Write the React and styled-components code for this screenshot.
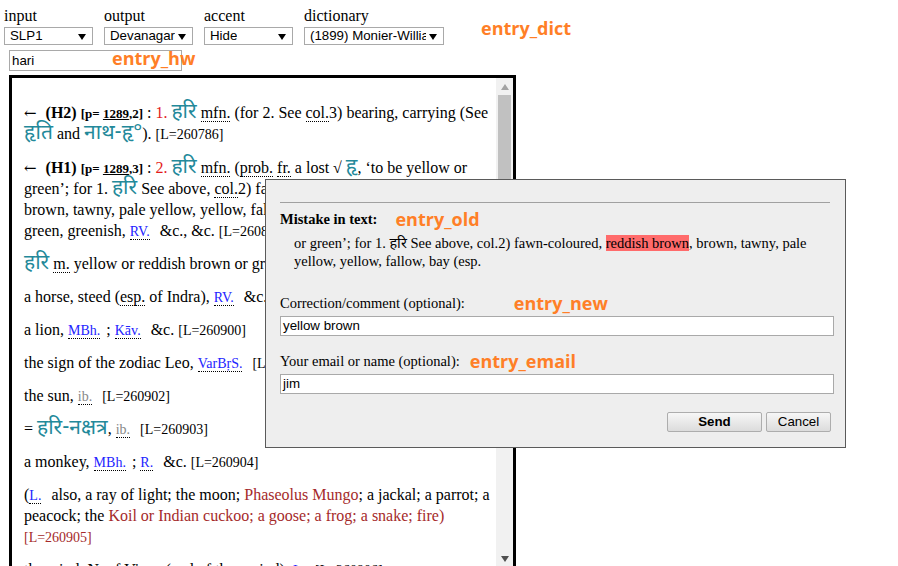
import { createGlobalStyle, styled } from "styled-components";

const GlobalStyle = createGlobalStyle`
    html, body {
        margin: 0;
        padding: 0;
        background: #fff;
        overflow: hidden;
        font-family: "Liberation Serif", "Times New Roman", serif;
        color: #000;
    }
`;

const DEVA = `"Noto Sans Devanagari", "Noto Serif Devanagari", "Lohit Devanagari", "Mukta", sans-serif`;

const Page = styled.div`
    position: relative;
    width: 898px;
    height: 566px;
    overflow: hidden;
`;

const Toolbar = styled.div`
    display: flex;
    align-items: flex-start;
    gap: 11px;
    padding: 6px 0 0 4px;
`;

const Field = styled.div`
    display: flex;
    flex-direction: column;
    font-size: 16px;
    line-height: 20px;
`;

const Select = styled.div`
    display: flex;
    align-items: center;
    justify-content: space-between;
    box-sizing: border-box;
    width: ${(p) => p.width || 89}px;
    height: 18px;
    margin-top: 1px;
    padding: 0 6px 0 5px;
    border: 1px solid #a9a9a9;
    background: #fff;
    font-family: "Liberation Sans", Arial, sans-serif;
    font-size: 13.3px;
    line-height: 16px;
    span {
        overflow: hidden;
        white-space: nowrap;
    }
    svg {
        flex: none;
        margin-left: 3px;
    }
`;

const Note = styled.span`
    font-family: "Open Sans", "Liberation Sans", sans-serif;
    font-weight: 700;
    font-size: 18px;
    line-height: 18px;
    color: #ff7f27;
    white-space: nowrap;
    margin-left: ${(p) => p.gap || 0}px;
`;

const DictNote = styled(Note)`
    margin-top: 13px;
`;

const HwRow = styled.div`
    position: relative;
    margin: 5px 0 0 9px;
    width: 173px;
    height: 21px;
    ${Note} {
        position: absolute;
        left: 103px;
        top: -1px;
    }
`;

const TextInput = styled.div`
    box-sizing: border-box;
    width: 100%;
    height: ${(p) => p.h || 21}px;
    border: 1px solid #a9a9a9;
    background: #fff;
    padding: 0 2px;
    font-family: "Liberation Sans", Arial, sans-serif;
    font-size: 13.3px;
    line-height: ${(p) => (p.h || 21) - 2}px;
`;

const EntryBox = styled.div`
    display: flex;
    box-sizing: border-box;
    margin: 4px 0 0 9px;
    width: 507px;
    height: 495px;
    border: 3px solid #000;
`;

const Entries = styled.div`
    flex: 1;
    overflow: hidden;
    padding: 24px 2px 0 12px;
    font-size: 16px;
    line-height: 21px;
`;

const Para = styled.p`
    margin: 0 0 ${(p) => p.gap || 12}px;
`;

const Back = styled.span`
    font-family: "DejaVu Serif", serif;
    font-size: 15px;
    line-height: 0;
    margin-right: 5px;
`;

const Scrollbar = styled.div`
    display: flex;
    flex-direction: column;
    width: 17px;
    background: #f1f1f1;
`;

const ScrollBtn = styled.div`
    height: 17px;
    display: flex;
    align-items: center;
    justify-content: center;
`;

const Thumb = styled.div`
    margin: 0 2px;
    height: ${(p) => p.h}px;
    background: #c1c1c1;
`;

const Track = styled.div`
    flex: 1;
`;

const Deva = styled.span`
    font-family: ${DEVA};
    font-size: 21px;
    line-height: 0;
    color: #23899a;
`;

const Abbr = styled.span`
    border-bottom: 1px dotted #000;
`;

const Src = styled.span`
    font-size: 14px;
    line-height: 0;
    color: ${(p) => (p.grey ? "#888" : "#2323ff")};
    border-bottom: 1px dotted #000;
    margin-right: 6px;
`;

const PageRef = styled.span`
    font-size: 13px;
    line-height: 0;
    font-weight: 700;
    u {
        text-decoration: underline;
    }
`;

const LNum = styled.span`
    font-size: 14px;
    line-height: 0;
    color: ${(p) => p.color || "#000"};
`;

const Num = styled.span`
    color: #e31b1b;
`;

const Brown = styled.span`
    color: #a52a2a;
`;

const Dialog = styled.div`
    position: absolute;
    left: 265px;
    top: 179px;
    box-sizing: border-box;
    width: 581px;
    height: 269px;
    border: 1px solid #5a5a5a;
    background: #eeeeee;
    padding: 22px 11px 0 14px;
    display: flex;
    flex-direction: column;
`;

const Rule = styled.div`
    height: 1px;
    margin-right: 4px;
    background: #a0a0a0;
`;

const DialogLabel = styled.div`
    display: flex;
    align-items: center;
    height: 18px;
    margin-top: ${(p) => p.mt}px;
    margin-bottom: ${(p) => p.mb || 0}px;
    font-size: 14.5px;
    line-height: 18px;
    font-weight: ${(p) => (p.bold ? 700 : 400)};
`;

const OldText = styled.div`
    margin-top: 6px;
    padding-left: 14px;
    font-size: 14.5px;
    line-height: 18px;
    white-space: nowrap;
    mark {
        background: #ff6b6b;
        color: #000;
    }
    ${Deva} {
        font-size: 14.5px;
        color: #000;
    }
`;

const Buttons = styled.div`
    display: flex;
    justify-content: flex-end;
    gap: 4px;
    margin: 18px 3px 0 0;
`;

const Button = styled.div`
    box-sizing: border-box;
    width: ${(p) => p.w}px;
    height: 20px;
    border: 1px solid #adadad;
    border-radius: 2px;
    background: linear-gradient(#f7f7f7, #dcdcdc);
    font-family: "Liberation Sans", Arial, sans-serif;
    font-size: 13.3px;
    font-weight: ${(p) => (p.bold ? 700 : 400)};
    line-height: 18px;
    text-align: center;
`;

const Arrow = ({ up, color = "#000", w = 8, h = 7 }) => (
    <svg width={w} height={h} viewBox="0 0 8 7">
        <path d={up ? "M0 7 L4 1 L8 7 Z" : "M0 1 L8 1 L4 7 Z"} fill={color} />
    </svg>
);

const selects = [
    { label: "input", value: "SLP1" },
    { label: "output", value: "Devanagari" },
    { label: "accent", value: "Hide" },
    { label: "dictionary", value: "(1899) Monier-Williams", width: 140 },
];

export default function App() {
    return (
        <Page>
            <GlobalStyle />
            <Toolbar>
                {selects.map((s) => (
                    <Field key={s.label}>
                        {s.label}
                        <Select width={s.width}>
                            <span>{s.value}</span>
                            <Arrow />
                        </Select>
                    </Field>
                ))}
                <DictNote gap={26}>entry_dict</DictNote>
            </Toolbar>
            <HwRow>
                <TextInput>hari</TextInput>
                <Note>entry_hw</Note>
            </HwRow>
            <EntryBox>
                <Entries>
                    <Para gap={13}>
                        <Back>←</Back> <b>(H2)</b> <PageRef>[p= <u>1289</u>,2]</PageRef> :{" "}
                        <Num>1.</Num> <Deva>हरि</Deva> <Abbr>mfn.</Abbr> (for 2. See{" "}
                        <Abbr>col.</Abbr>3) bearing, carrying (See <Deva>हृति</Deva> and{" "}
                        <Deva>नाथ-हृ°</Deva>). <LNum>[L=260786]</LNum>
                    </Para>
                    <Para>
                        <Back>←</Back> <b>(H1)</b> <PageRef>[p= <u>1289</u>,3]</PageRef> :{" "}
                        <Num>2.</Num> <Deva>हरि</Deva> <Abbr>mfn.</Abbr> (<Abbr>prob.</Abbr>{" "}
                        <Abbr>fr.</Abbr> a lost √ <Deva>हृ</Deva>, ‘to be yellow or green’; for 1.{" "}
                        <Deva>हरि</Deva> See above, <Abbr>col.</Abbr>2) fawn-coloured, reddish brown,
                        brown, tawny, pale yellow, yellow, fallow, bay (<Abbr>esp.</Abbr> of horses),
                        <br />
                        green, greenish, <Src>RV.</Src> &amp;c., &amp;c. <LNum>[L=260897]</LNum>
                    </Para>
                    <Para>
                        <Deva>हरि</Deva> <Abbr>m.</Abbr> yellow or reddish brown or green (the colour),{" "}
                        <Src>L.</Src> <LNum>[L=260898]</LNum>
                    </Para>
                    <Para>
                        a horse, steed (<Abbr>esp.</Abbr> of Indra), <Src>RV.</Src> &amp;c.{" "}
                        <LNum>[L=260899]</LNum>
                    </Para>
                    <Para>
                        a lion, <Src>MBh.</Src>; <Src>Kāv.</Src> &amp;c. <LNum>[L=260900]</LNum>
                    </Para>
                    <Para>
                        the sign of the zodiac Leo, <Src>VarBṛS.</Src> <LNum>[L=260901]</LNum>
                    </Para>
                    <Para>
                        the sun, <Src grey>ib.</Src> <LNum>[L=260902]</LNum>
                    </Para>
                    <Para>
                        = <Deva>हरि-नक्षत्र</Deva>, <Src grey>ib.</Src> <LNum>[L=260903]</LNum>
                    </Para>
                    <Para>
                        a monkey, <Src>MBh.</Src>; <Src>R.</Src> &amp;c. <LNum>[L=260904]</LNum>
                    </Para>
                    <Para>
                        (<Src>L.</Src> also, a ray of light; the moon; <Brown>Phaseolus Mungo</Brown>; a
                        jackal; a parrot; a peacock; the{" "}
                        <Brown>Koil or Indian cuckoo; a goose; a frog; a snake; fire)</Brown>{" "}
                        <LNum color="#a52a2a">[L=260905]</LNum>
                    </Para>
                    <Para>
                        the wind, N. of Viṣṇu (end of the period), <Src>L.</Src>{" "}
                        <LNum>[L=260906]</LNum>
                    </Para>
                </Entries>
                <Scrollbar>
                    <ScrollBtn>
                        <Arrow up color="#a3a3a3" />
                    </ScrollBtn>
                    <Thumb h={210} />
                    <Track />
                    <ScrollBtn>
                        <Arrow color="#505050" />
                    </ScrollBtn>
                </Scrollbar>
            </EntryBox>

            <Dialog>
                <Rule />
                <DialogLabel bold mt={7}>
                    Mistake in text:
                    <Note gap={18}>entry_old</Note>
                </DialogLabel>
                <OldText>
                    or green’; for 1. <Deva>हरि</Deva> See above, col.2) fawn-coloured,{" "}
                    <mark>reddish brown</mark>, brown, tawny, pale
                    <br />
                    yellow, yellow, fallow, bay (esp.
                </OldText>
                <DialogLabel mt={24} mb={4}>
                    Correction/comment (optional):
                    <Note gap={49}>entry_new</Note>
                </DialogLabel>
                <TextInput h={20}>yellow brown</TextInput>
                <DialogLabel mt={16} mb={4}>
                    Your email or name (optional):
                    <Note gap={10}>entry_email</Note>
                </DialogLabel>
                <TextInput h={20}>jim</TextInput>
                <Buttons>
                    <Button w={95} bold>
                        Send
                    </Button>
                    <Button w={65}>Cancel</Button>
                </Buttons>
            </Dialog>
        </Page>
    );
}
